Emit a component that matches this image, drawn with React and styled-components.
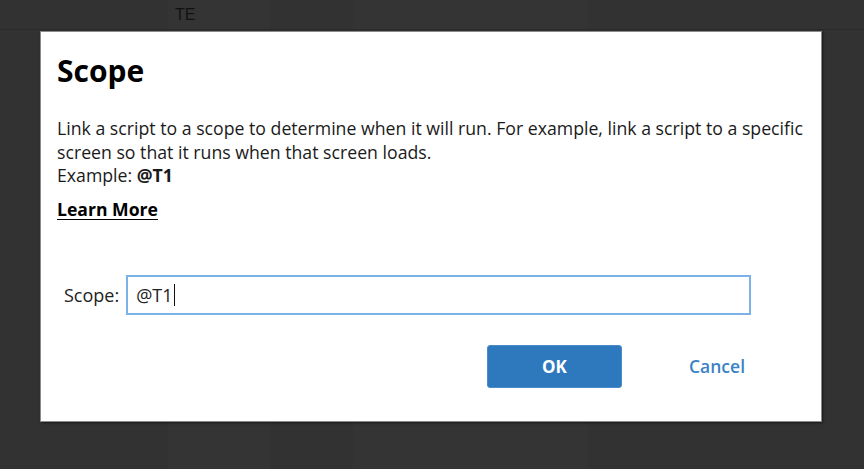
import React from 'react';
import styled, { createGlobalStyle } from 'styled-components';

const Global = createGlobalStyle`
  html, body {
    margin: 0;
    padding: 0;
    background: #333333;
  }
  body {
    font-family: "Open Sans", "Noto Sans", sans-serif;
  }
`;

const Page = styled.div`
  position: relative;
  width: 864px;
  height: 469px;
  overflow: hidden;
  background: #333333;
`;

const Columns = styled.div`
  display: grid;
  grid-template-columns: 168px 102px 83px 235px 1fr;
  height: 100%;
`;

const Column = styled.div`
  background: ${(p) => (p.alt ? '#323232' : '#343434')};
  display: flex;
  flex-direction: column;
`;

const HeaderCell = styled.div`
  height: 29px;
  border-bottom: 1px solid #2b2b2b;
  color: #111;
  font-family: "Liberation Sans", sans-serif;
  font-size: 16px;
  display: flex;
  align-items: center;
  padding-left: 7px;
`;

const Dialog = styled.div`
  position: absolute;
  left: 40px;
  top: 31px;
  width: 782px;
  height: 391px;
  background: #fff;
  border: 1px solid #8a8a8a;
  box-shadow: 1px 1px 2px rgba(0, 0, 0, 0.5);
  box-sizing: border-box;
  padding: 20px 16px 0 16px;
  color: #1a1a1a;
  display: flex;
  flex-direction: column;
`;

const Title = styled.h1`
  margin: 0;
  font-size: 30px;
  font-weight: 700;
  line-height: 38px;
  color: #000;
`;

const Description = styled.p`
  margin: 27px 0 0 0;
  font-size: 17.7px;
  line-height: 23.5px;
  white-space: nowrap;
`;

const LearnMore = styled.a`
  margin-top: 9px;
  font-size: 17.6px;
  line-height: 24px;
  font-weight: 700;
  color: #000;
  text-decoration: underline;
  text-underline-offset: 3px;
  align-self: flex-start;
`;

const Field = styled.div`
  display: flex;
  align-items: center;
  gap: 7px;
  margin-top: 54px;
  padding-left: 7px;
`;

const Label = styled.label`
  font-size: 18px;
  color: #222;
`;

const Input = styled.div`
  width: 625px;
  height: 40px;
  box-sizing: border-box;
  border: 2px solid #7db2e8;
  display: flex;
  align-items: center;
  padding-left: 8px;
  font-size: 18px;
  color: #222;
`;

const Caret = styled.span`
  display: inline-block;
  width: 1.5px;
  height: 22px;
  background: #111;
  margin-left: 1px;
`;

const Actions = styled.div`
  display: flex;
  align-items: center;
  margin-top: 30px;
  padding-left: 430px;
`;

const OkButton = styled.button`
  width: 135px;
  height: 43px;
  background: #2e78bd;
  border: 1px solid #4a8ccb;
  border-radius: 3px;
  color: #fff;
  font-family: inherit;
  font-size: 17px;
  font-weight: 700;
`;

const CancelButton = styled.button`
  margin-left: 67px;
  background: none;
  border: none;
  padding: 0;
  color: #3b82c6;
  font-family: inherit;
  font-size: 17.5px;
  font-weight: 600;
`;

export default function App() {
  return (
    <Page>
      <Global />
      <Columns>
        <Column alt><HeaderCell /></Column>
        <Column><HeaderCell>TE</HeaderCell></Column>
        <Column alt><HeaderCell /></Column>
        <Column><HeaderCell /></Column>
        <Column alt><HeaderCell /></Column>
      </Columns>
      <Dialog>
        <Title>Scope</Title>
        <Description>
          Link a script to a scope to determine when it will run. For example, link a script to a specific
          <br />
          screen so that it runs when that screen loads.
          <br />
          Example: <b>@T1</b>
        </Description>
        <LearnMore>Learn More</LearnMore>
        <Field>
          <Label>Scope:</Label>
          <Input>
            @T1<Caret />
          </Input>
        </Field>
        <Actions>
          <OkButton>OK</OkButton>
          <CancelButton>Cancel</CancelButton>
        </Actions>
      </Dialog>
    </Page>
  );
}
